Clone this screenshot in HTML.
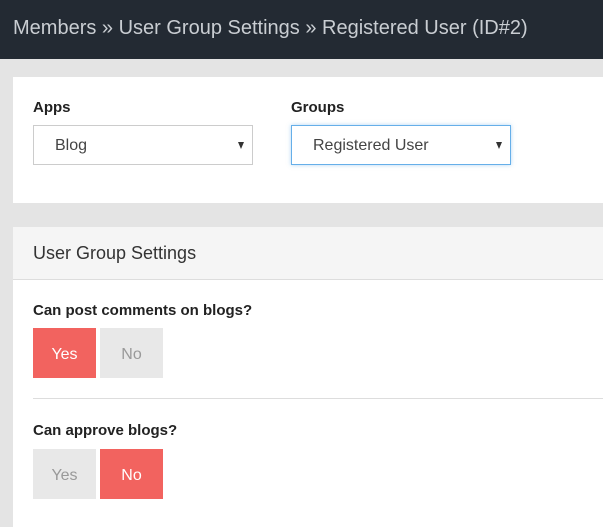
<!DOCTYPE html>
<html><head><style>
*{margin:0;padding:0;box-sizing:border-box}
body{width:603px;height:515px;overflow:hidden;background:#e4e4e4;font-family:"Liberation Sans",Arial,sans-serif;position:relative}
.hdr{position:absolute;left:0;top:0;width:603px;height:59px;background:#232a33;color:#c9cdd2;font-size:20px;line-height:56px;padding-left:13px;white-space:nowrap}
.card{position:absolute;left:13px;background:#fff;right:-10px}
.lbl{position:absolute;font-weight:bold;font-size:15px;color:#222}
.sel{position:absolute;top:48px;height:40px;width:220px;border:1px solid #ccc;font-size:16px;color:#444;padding-left:21px;line-height:40px}
.sel:after{content:"";position:absolute;right:8px;top:16px;border-left:3.5px solid transparent;border-right:3.5px solid transparent;border-top:7px solid #333}
.btn{position:absolute;width:63px;height:50px;font-size:16px;text-align:center;line-height:53px}
.on{background:#f2635f;color:#fff}.off{background:#e8e8e8;color:#999}
</style></head><body>
<div class="hdr">Members » User Group Settings » Registered User (ID#2)</div>
<div class="card" style="top:77px;height:126px">
<div class="lbl" style="left:20px;top:22px">Apps</div>
<div class="lbl" style="left:278px;top:22px">Groups</div>
<div class="sel" style="left:20px">Blog</div>
<div class="sel" style="left:278px;border-color:#66afe9;box-shadow:0 0 4px rgba(102,175,233,.5)">Registered User</div>
</div>
<div class="card" style="top:227px;height:300px">
<div style="height:53px;background:#f5f5f5;border-bottom:1px solid #ddd;font-size:18px;color:#333;padding-left:20px;line-height:52px">User Group Settings</div>
<div class="lbl" style="left:20px;top:75px">Can post comments on blogs?</div>
<div class="btn on" style="left:20px;top:101px">Yes</div>
<div class="btn off" style="left:87px;top:101px">No</div>
<div style="position:absolute;left:20px;right:0;top:171px;height:1px;background:#ddd"></div>
<div class="lbl" style="left:20px;top:195px">Can approve blogs?</div>
<div class="btn off" style="left:20px;top:222px">Yes</div>
<div class="btn on" style="left:87px;top:222px">No</div>
</div>
</body></html>
